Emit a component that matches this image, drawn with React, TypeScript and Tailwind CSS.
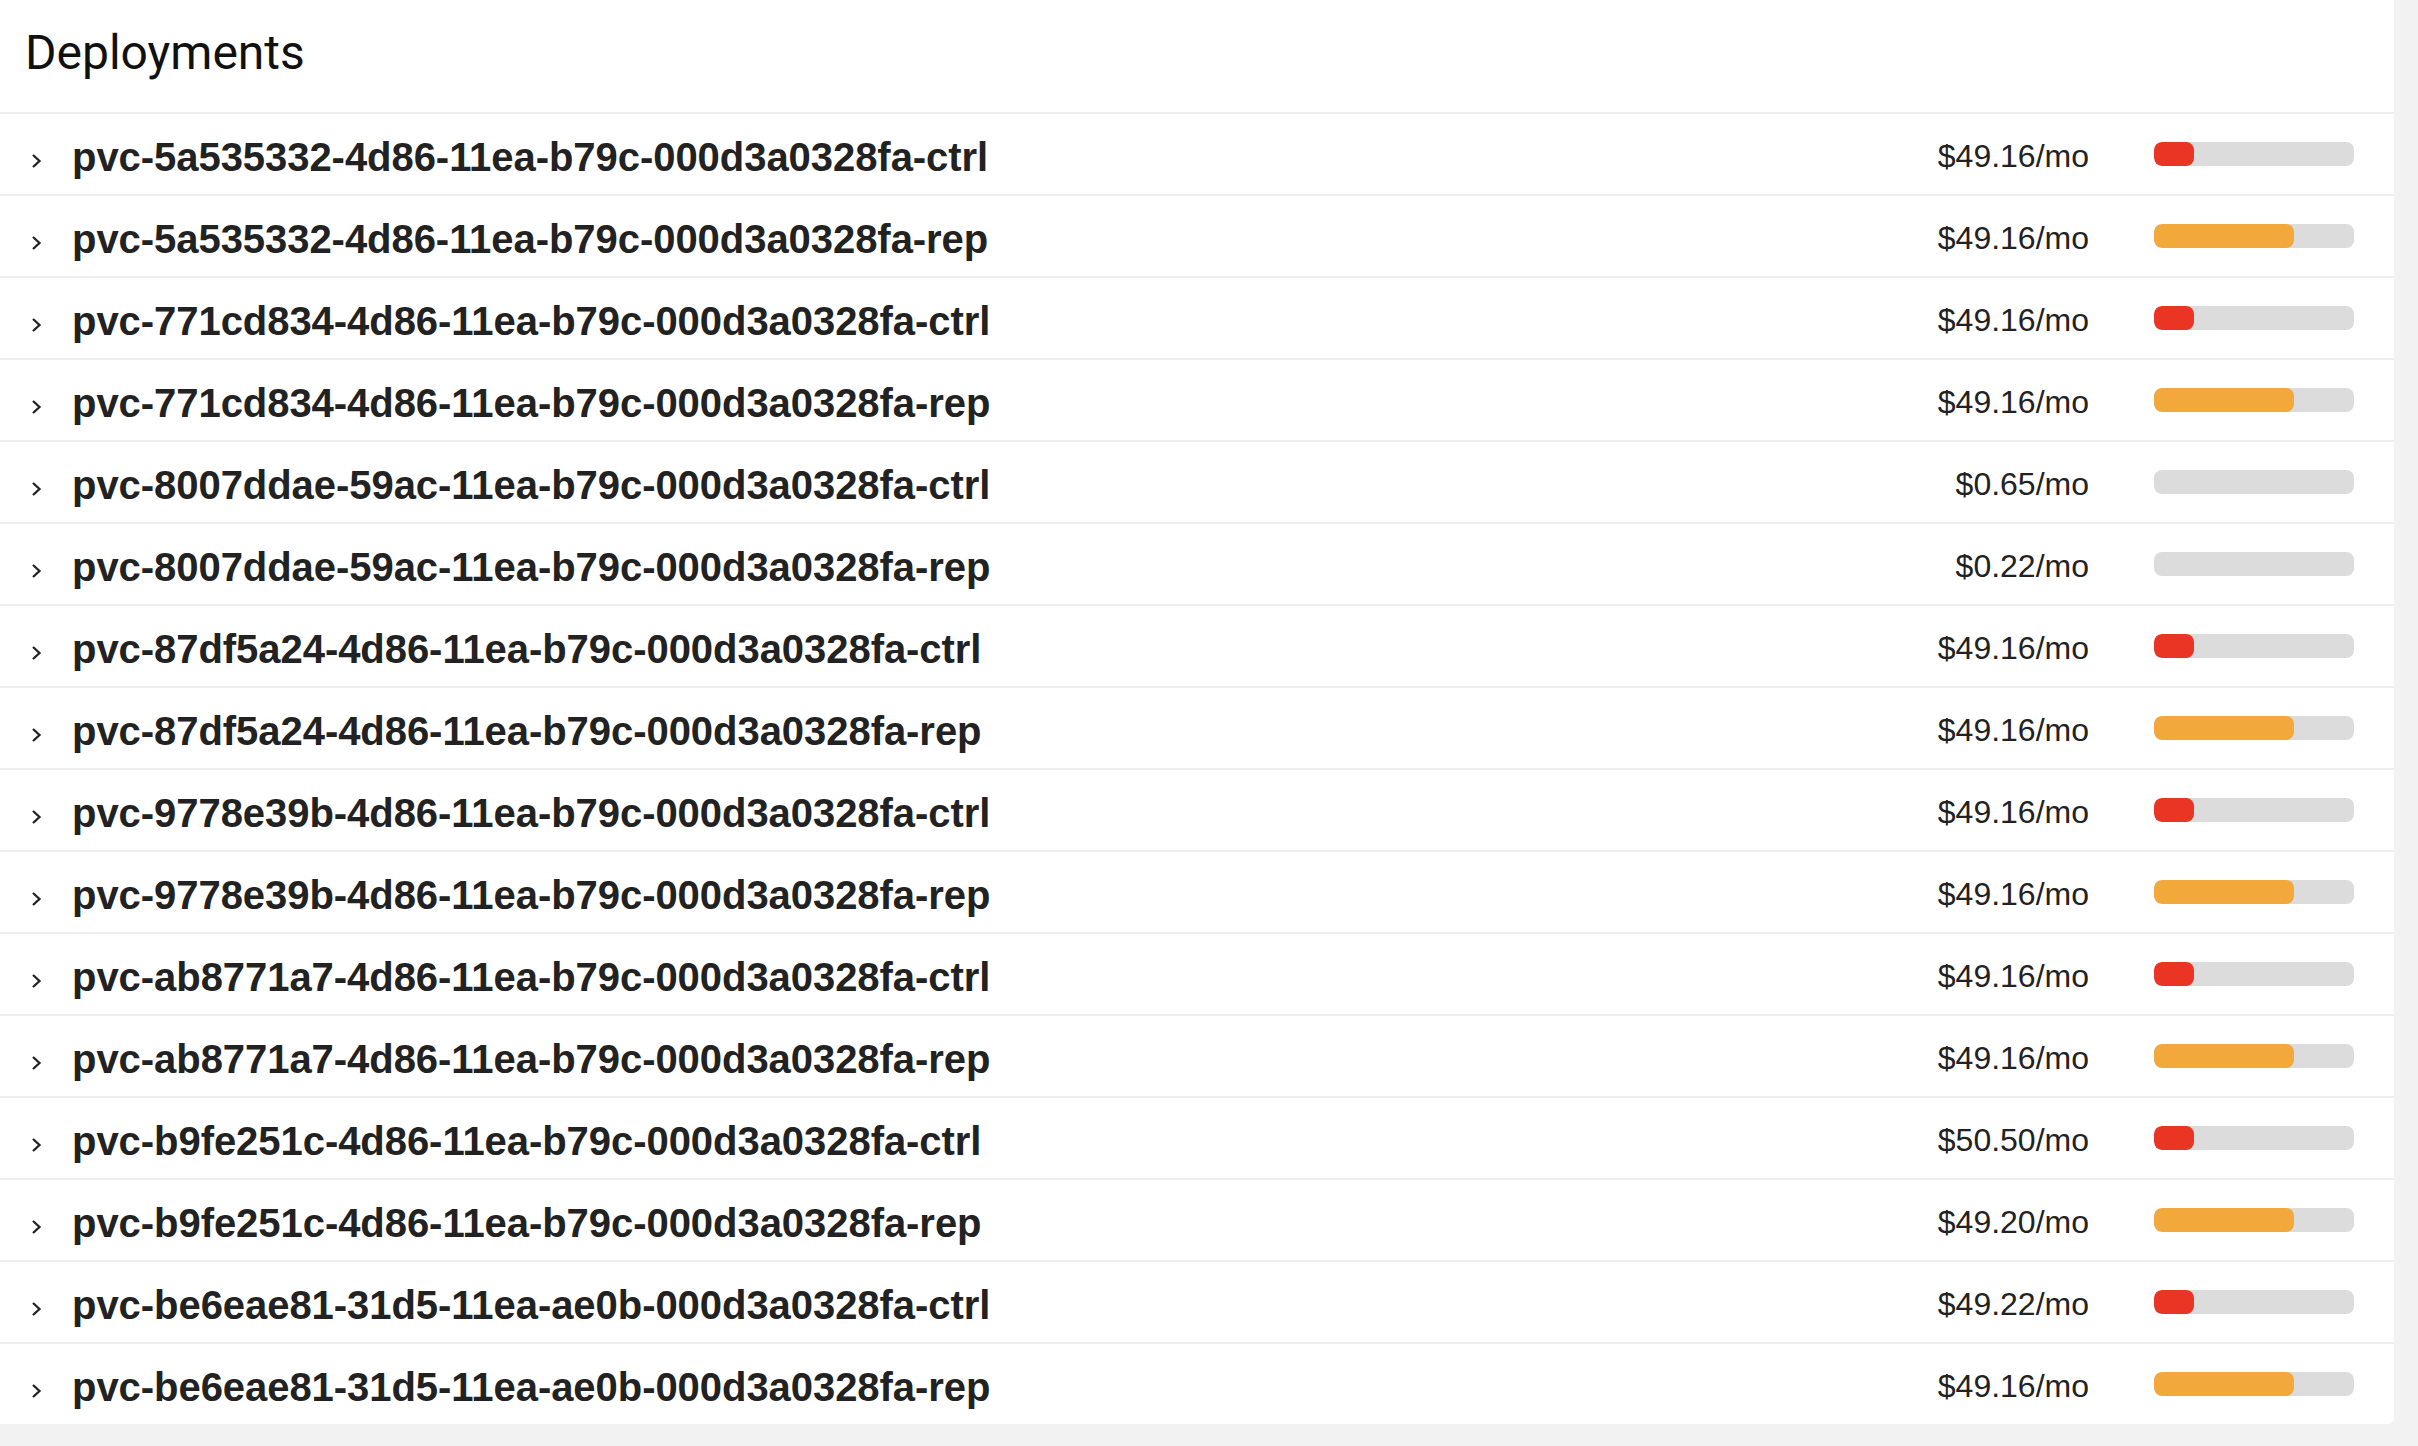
const deployments = [
  { name: 'pvc-5a535332-4d86-11ea-b79c-000d3a0328fa-ctrl', cost: '$49.16/mo', level: 'high' },
  { name: 'pvc-5a535332-4d86-11ea-b79c-000d3a0328fa-rep', cost: '$49.16/mo', level: 'mid' },
  { name: 'pvc-771cd834-4d86-11ea-b79c-000d3a0328fa-ctrl', cost: '$49.16/mo', level: 'high' },
  { name: 'pvc-771cd834-4d86-11ea-b79c-000d3a0328fa-rep', cost: '$49.16/mo', level: 'mid' },
  { name: 'pvc-8007ddae-59ac-11ea-b79c-000d3a0328fa-ctrl', cost: '$0.65/mo', level: 'none' },
  { name: 'pvc-8007ddae-59ac-11ea-b79c-000d3a0328fa-rep', cost: '$0.22/mo', level: 'none' },
  { name: 'pvc-87df5a24-4d86-11ea-b79c-000d3a0328fa-ctrl', cost: '$49.16/mo', level: 'high' },
  { name: 'pvc-87df5a24-4d86-11ea-b79c-000d3a0328fa-rep', cost: '$49.16/mo', level: 'mid' },
  { name: 'pvc-9778e39b-4d86-11ea-b79c-000d3a0328fa-ctrl', cost: '$49.16/mo', level: 'high' },
  { name: 'pvc-9778e39b-4d86-11ea-b79c-000d3a0328fa-rep', cost: '$49.16/mo', level: 'mid' },
  { name: 'pvc-ab8771a7-4d86-11ea-b79c-000d3a0328fa-ctrl', cost: '$49.16/mo', level: 'high' },
  { name: 'pvc-ab8771a7-4d86-11ea-b79c-000d3a0328fa-rep', cost: '$49.16/mo', level: 'mid' },
  { name: 'pvc-b9fe251c-4d86-11ea-b79c-000d3a0328fa-ctrl', cost: '$50.50/mo', level: 'high' },
  { name: 'pvc-b9fe251c-4d86-11ea-b79c-000d3a0328fa-rep', cost: '$49.20/mo', level: 'mid' },
  { name: 'pvc-be6eae81-31d5-11ea-ae0b-000d3a0328fa-ctrl', cost: '$49.22/mo', level: 'high' },
  { name: 'pvc-be6eae81-31d5-11ea-ae0b-000d3a0328fa-rep', cost: '$49.16/mo', level: 'mid' },
]

const Chevron = () => (
  <svg width="11" height="16" viewBox="0 0 11 16" className="mt-[14px] shrink-0">
    <path d="M2 2 L8.5 8 L2 14" fill="none" stroke="#222" strokeWidth="2.3" />
  </svg>
)

const UsageBar = ({ level }: { level: string }) => (
  <div className="w-[200px] h-[24px] rounded-[8px] bg-[#dcdcdc] overflow-hidden">
    {level === 'high' && <div className="h-full w-[40px] rounded-[8px] bg-[#ea3424]" />}
    {level === 'mid' && <div className="h-full w-[140px] rounded-[8px] bg-[#f2a83b]" />}
  </div>
)

export default function App() {
  return (
    <div className="min-h-screen bg-[#f2f2f2]" style={{ fontFamily: '"Liberation Sans", Arial, sans-serif' }}>
      <div className="w-[2394px] bg-white rounded-br-[6px]">
        {/* header */}
        <div className="h-[114px] pl-[25px] pt-[17px] border-b-2 border-[#eeeeee]">
          <h1 className="text-[48px] leading-normal text-[#111]" style={{ fontFamily: 'Roboto, sans-serif' }}>
            Deployments
          </h1>
        </div>

        {deployments.map((d, i) => (
          <div
            key={d.name}
            className={`h-[80px] flex items-center pl-[31px] pr-[40px] ${i < deployments.length - 1 ? 'box-content border-b-2 border-[#eeeeee]' : ''}`}
          >
            <Chevron />
            <span className="ml-[30px] flex-1 pt-[5px] text-[40px] font-bold text-[#222] leading-normal tracking-[-0.05px]">
              {d.name}
            </span>
            <span className="text-[32px] text-[#222] leading-normal pt-[3px]">{d.cost}</span>
            <div className="ml-[65px]">
              <UsageBar level={d.level} />
            </div>
          </div>
        ))}
      </div>
    </div>
  )
}
